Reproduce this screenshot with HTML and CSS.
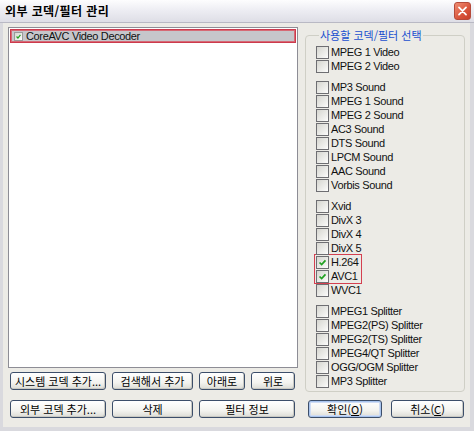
FILE: index.html
```html
<!DOCTYPE html>
<html lang="ko">
<head>
<meta charset="utf-8">
<title>외부 코덱/필터 관리</title>
<link rel="stylesheet" href="styles.css">
</head>
<body>
<div class="window">
  <div class="titlebar">
    <span class="title">외부 코덱/필터 관리</span>
    <span class="close">
      <svg width="17" height="18" viewBox="0 0 17 18"><path d="M4.5 5 L12.5 13 M12.5 5 L4.5 13" stroke="#fff" stroke-width="2" stroke-linecap="round"/></svg>
    </span>
  </div>
  <div class="frame">
    <div class="left">
      <div class="listbox">
        <div class="item selected">
          <span class="cb small checked"><svg viewBox="0 0 9 9"><path d="M2 4.5 L3.8 6.5 L7 2.5" fill="none" stroke="#21a121" stroke-width="1.6"/></svg></span>
          <span class="latin">CoreAVC Video Decoder</span>
        </div>
      </div>
      <div class="btnrow row1">
        <button class="btn w96">시스템 코덱 추가...</button>
        <button class="btn w81">검색해서 추가</button>
        <button class="btn w46">아래로</button>
        <button class="btn w44">위로</button>
      </div>
      <div class="btnrow row2">
        <button class="btn w96">외부 코덱 추가...</button>
        <button class="btn w81">삭제</button>
        <button class="btn w96">필터 정보</button>
      </div>
    </div>
    <div class="right">
      <fieldset class="group">
        <legend>사용할 코덱/필터 선택</legend>
        <div class="set">
          <label class="row"><span class="cb"></span>MPEG 1 Video</label>
          <label class="row"><span class="cb"></span>MPEG 2 Video</label>
        </div>
        <div class="set">
          <label class="row"><span class="cb"></span>MP3 Sound</label>
          <label class="row"><span class="cb"></span>MPEG 1 Sound</label>
          <label class="row"><span class="cb"></span>MPEG 2 Sound</label>
          <label class="row"><span class="cb"></span>AC3 Sound</label>
          <label class="row"><span class="cb"></span>DTS Sound</label>
          <label class="row"><span class="cb"></span>LPCM Sound</label>
          <label class="row"><span class="cb"></span>AAC Sound</label>
          <label class="row"><span class="cb"></span>Vorbis Sound</label>
        </div>
        <div class="set">
          <label class="row"><span class="cb"></span>Xvid</label>
          <label class="row"><span class="cb"></span>DivX 3</label>
          <label class="row"><span class="cb"></span>DivX 4</label>
          <label class="row"><span class="cb"></span>DivX 5</label>
          <div class="mark">
            <label class="row"><span class="cb checked"><svg viewBox="0 0 13 13"><path d="M3 6.5 L5.5 9 L10 4" fill="none" stroke="#21a121" stroke-width="2"/></svg></span>H.264</label>
            <label class="row"><span class="cb checked"><svg viewBox="0 0 13 13"><path d="M3 6.5 L5.5 9 L10 4" fill="none" stroke="#21a121" stroke-width="2"/></svg></span>AVC1</label>
          </div>
          <label class="row"><span class="cb"></span>WVC1</label>
        </div>
        <div class="set">
          <label class="row"><span class="cb"></span>MPEG1 Splitter</label>
          <label class="row"><span class="cb"></span>MPEG2(PS) Splitter</label>
          <label class="row"><span class="cb"></span>MPEG2(TS) Splitter</label>
          <label class="row"><span class="cb"></span>MPEG4/QT Splitter</label>
          <label class="row"><span class="cb"></span>OGG/OGM Splitter</label>
          <label class="row"><span class="cb"></span>MP3 Splitter</label>
        </div>
      </fieldset>
      <div class="btnrow okrow">
        <button class="btn default w74">확인(<u>O</u>)</button>
        <button class="btn w73">취소(<u>C</u>)</button>
      </div>
    </div>
  </div>
</div>
</body>
</html>
```
FILE: styles.css
```css
html, body {
  margin: 0;
  padding: 0;
}
body {
  width: 474px;
  height: 431px;
  overflow: hidden;
  font-family: "Noto Sans CJK KR", "Liberation Sans", sans-serif;
  font-size: 11px;
  color: #000;
}
.window {
  width: 474px;
  height: 431px;
  display: flex;
  flex-direction: column;
  background: #d9d9de;
}
.titlebar {
  height: 22px;
  border-bottom: 1px solid #b9b9c4;
  background: linear-gradient(#fdfdfe, #ececf2 50%, #dedee6);
  display: flex;
  align-items: center;
  justify-content: space-between;
  padding: 0 3px 0 5px;
}
.title {
  font-weight: bold;
  font-size: 12px;
  line-height: 16px;
  letter-spacing: 0.4px;
}
.close {
  width: 17px;
  height: 18px;
  border-radius: 3px;
  border: 1px solid #b54a3a;
  background: linear-gradient(135deg, #f08e74, #d8543b 60%, #c7402a);
  display: flex;
  box-sizing: border-box;
}
.close svg { display: block; width: 15px; height: 16px; }
.frame {
  flex: 1;
  margin: 0 4px 4px 3px;
  background: #ecebe6;
  display: flex;
  padding: 4px 0 0 5px;
  gap: 7px;
}
.left {
  width: 290px;
  display: flex;
  flex-direction: column;
}
.listbox {
  height: 341px;
  box-sizing: border-box;
  background: #fff;
  border: 1px solid #8d8d95;
  padding: 1px;
}
.item {
  height: 12px;
  display: flex;
  align-items: center;
  gap: 3px;
  padding-left: 3px;
}
.item.selected {
  background: #c6c6cb;
  border: 1px solid #cc3a4c;
  box-shadow: inset 0 0 0 1px #d66a76;
}
.latin, .row {
  font-family: "Liberation Sans", sans-serif;
  font-size: 11px;
  letter-spacing: -0.35px;
  line-height: 14px;
  color: #111;
}
.cb {
  width: 13px;
  height: 13px;
  box-sizing: border-box;
  border: 1px solid #6e6e72;
  background: linear-gradient(135deg, #d6d6d0, #f4f4f2 80%, #fff);
  display: inline-flex;
  flex-shrink: 0;
}
.cb svg { width: 100%; height: 100%; display: block; }
.cb.small {
  width: 9px;
  height: 9px;
  border-color: #9a9a9a;
}
.btnrow {
  display: flex;
  gap: 6px;
}
.row1 { margin-top: 4px; padding-left: 2px; }
.row2 { margin-top: 10px; padding-left: 2px; }
.btn {
  height: 18px;
  box-sizing: border-box;
  border: 1px solid #3c4e6a;
  border-radius: 3px;
  background: linear-gradient(#ffffff, #f3f3ef 60%, #dcdcd6);
  font-family: inherit;
  font-size: 11px;
  line-height: 14px;
  padding: 0;
  color: #000;
  white-space: nowrap;
  box-shadow: inset -1px -1px 0 #c9c9c2;
}
.btn.default {
  box-shadow: inset 0 0 0 1px #a8c4ee, inset 0 0 0 2px #cfdcf4;
}
.w96 { width: 96px; }
.w81 { width: 81px; }
.w46 { width: 46px; }
.w44 { width: 44px; }
.w74 { width: 74px; }
.w73 { width: 73px; }
.right {
  width: 160px;
  display: flex;
  flex-direction: column;
  padding-top: 1px;
}
.group {
  margin: 0;
  height: 364px;
  box-sizing: border-box;
  border: 1px solid #cfcfc6;
  border-radius: 4px;
  padding: 3px 0 0 10px;
}
.group legend {
  color: #1a4fcf;
  padding: 0 1px;
  margin-left: 3px;
  line-height: 14px;
}
.set { margin-bottom: 7px; }
.row {
  height: 14px;
  display: flex;
  align-items: center;
  gap: 2px;
  white-space: nowrap;
}
.mark {
  width: fit-content;
  border: 1px solid #d44050;
  margin: -1px 0 -1px -2px;
  padding: 0 2px 0 1px;
}
.okrow {
  margin-top: 8px;
  padding-left: 3px;
  gap: 9px;
}
```
